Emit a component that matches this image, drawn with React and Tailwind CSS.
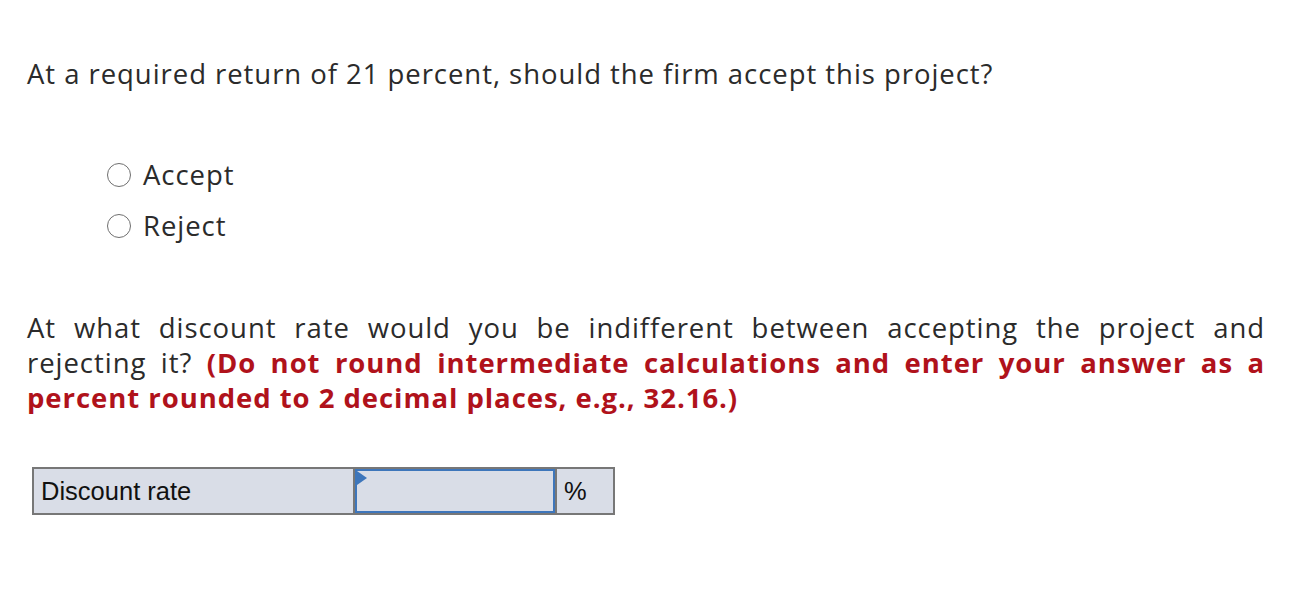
import React from 'react';

const font = { fontFamily: '"Open Sans", Lato, sans-serif' };

const Radio = ({ label }) => (
  <label className="flex items-center gap-[12px] h-[51px]">
    <span className="w-[24px] h-[24px] rounded-full border-[1.5px] border-[#6f6f6f] bg-white" />
    <span>{label}</span>
  </label>
);

export default function App() {
  return (
    <div className="w-[1303px] h-[608px] bg-white text-[#2b2b2b] text-[27.5px] leading-[35px] tracking-[0.95px]" style={font}>
      <div className="pl-[27px] pr-[38px] pt-[56px]">
        <p>At a required return of 21 percent, should the firm accept this project?</p>

        <div className="pl-[80px] pt-[58px]">
          <Radio label="Accept" />
          <Radio label="Reject" />
        </div>

        <div className="pt-[59px]">
          <p className="text-justify [text-align-last:justify]">
            At what discount rate would you be indifferent between accepting the project and
          </p>
          <p className="text-justify [text-align-last:justify]">
            rejecting it?{' '}
            <b className="text-[#b0121b] font-bold">(Do not round intermediate calculations and enter your answer as a</b>
          </p>
          <p>
            <b className="text-[#b0121b] font-bold">percent rounded to 2 decimal places, e.g., 32.16.)</b>
          </p>
        </div>

        <div className="mt-[52px] ml-[5px] flex w-[583px] h-[48px] border-2 border-[#777] bg-[#d9dde7] tracking-normal" style={{ fontFamily: '"Liberation Sans", Arial, sans-serif' }}>
          <div className="w-[321px] flex items-center pl-[7px] text-[25.5px] text-[#111] border-r-2 border-[#777]">Discount rate</div>
          <div className="relative w-[200px] border-2 border-[#3e76bb] bg-[#d9dde7]">
            <svg className="absolute left-0 top-0" width="10" height="14" viewBox="0 0 10 14">
              <polygon points="0,0 10,7 0,14" fill="#3e76bb" />
            </svg>
          </div>
          <div className="flex-1 flex items-center pl-[7px] text-[25.5px] text-[#111] border-l-2 border-[#777]">%</div>
        </div>
      </div>
    </div>
  );
}
